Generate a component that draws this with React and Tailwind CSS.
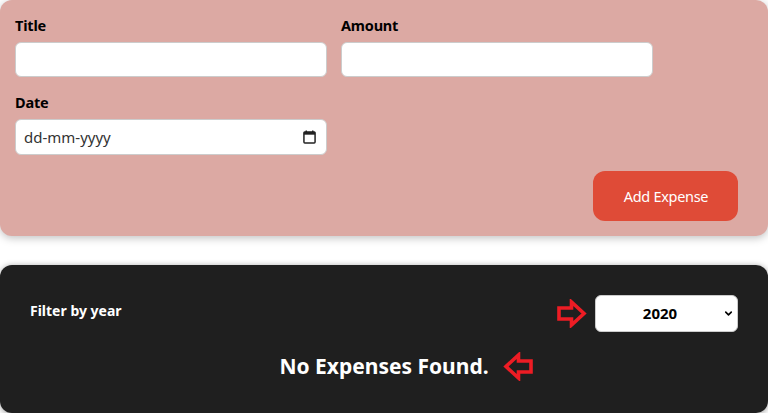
import { ChevronDown } from 'lucide-react';

function OutlineArrow({ flip, className }) {
  return (
    <svg width="30" height="29" viewBox="0 0 30 29" className={className} style={flip ? { transform: 'scaleX(-1)' } : undefined}>
      <path d="M2 9H14.5V3L27 14.5L14.5 26V20H2Z" fill="none" stroke="#ed1c24" strokeWidth="3.6" strokeLinejoin="miter" />
    </svg>
  );
}

function Field({ label, children }) {
  return (
    <div className="w-[312px] flex flex-col">
      <label className="text-[14.5px] tracking-[-0.2px] leading-[18px] font-bold text-black mb-[8px]">{label}</label>
      {children}
    </div>
  );
}

export default function App() {
  return (
    <div className="w-[768px] h-[413px] overflow-hidden bg-white font-['Noto_Sans',sans-serif]">
      <form className="h-[236px] bg-[#dca9a3] rounded-xl shadow-[0_2px_8px_rgba(0,0,0,0.25)] pt-4 pl-[15px] pr-[30px]">
        <div className="flex gap-[14px]">
          <Field label="Title">
            <input type="text" className="h-[35px] bg-white border border-[#ccc] rounded-md" />
          </Field>
          <Field label="Amount">
            <input type="text" className="h-[35px] bg-white border border-[#ccc] rounded-md" />
          </Field>
        </div>
        <div className="mt-[16px]">
          <Field label="Date">
            <div className="h-[36px] bg-white border border-[#ccc] rounded-md flex items-center justify-between pl-2 pr-[10px] text-[15px] text-[#333]">
              <span>dd-mm-yyyy</span>
              <svg width="13" height="14" viewBox="0 0 14 15">
                <path d="M3.5 0.5V2.5M10.5 0.5V2.5" stroke="#222" strokeWidth="1.6" />
                <rect x="1" y="2" width="12" height="12" rx="1" fill="none" stroke="#222" strokeWidth="1.6" />
                <rect x="1" y="2" width="12" height="3" fill="#222" />
              </svg>
            </div>
          </Field>
        </div>
        <div className="flex justify-end mt-4">
          <button type="button" className="w-[145px] h-[50px] pt-[2px] pl-px bg-[#df4b37] rounded-xl text-white text-[14.5px] tracking-[-0.3px]">Add Expense</button>
        </div>
      </form>

      <div className="mt-[29px] h-[148px] bg-[#1f1f1f] rounded-xl shadow-[0_1px_6px_rgba(0,0,0,0.4)] pt-[30px] px-[30px]">
        <div className="flex items-center justify-between">
          <label className="text-white font-bold text-[14px] -mt-[6px]">Filter by year</label>
          <div className="flex items-center gap-2">
            <OutlineArrow />
            <div className="relative w-[143px] h-[37px] bg-white rounded-md border border-[#ccc]">
              <select className="w-full h-full appearance-none bg-transparent text-center font-bold text-[15px] text-black pr-[13px]">
                <option>2020</option>
                <option>2021</option>
                <option>2022</option>
              </select>
              <ChevronDown size={11} strokeWidth={3.5} className="absolute right-[3px] top-[12px] text-black pointer-events-none" />
            </div>
          </div>
        </div>
        <div className="mt-[21px] flex justify-center">
          <p className="relative text-white font-bold text-[21px] leading-[27px]">
            No Expenses Found.
            <OutlineArrow flip className="absolute left-[224px] top-[-1px]" />
          </p>
        </div>
      </div>
    </div>
  );
}
